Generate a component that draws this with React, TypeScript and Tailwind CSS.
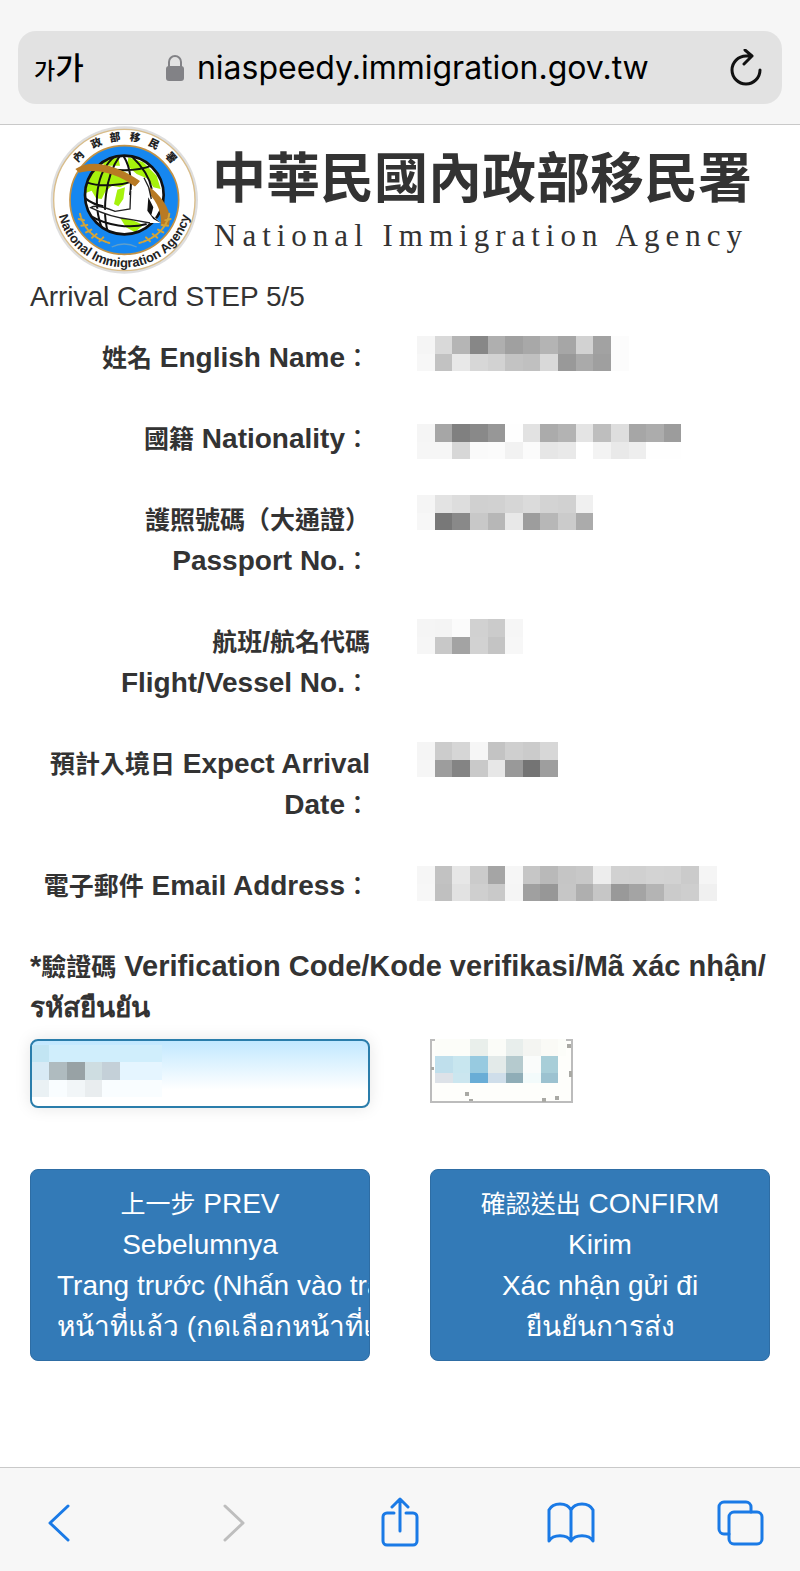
import { ReactNode } from 'react';

interface MosaicProps {
    rows: string[]
    top: number
}

interface FieldProps {
    label: ReactNode
    rows: string[]
    top: number
}

const CELL = 17.63;

const fields: FieldProps[] = [
    {
        label: <><Zh>姓名</Zh> English Name<Colon /></>,
        top: 7,
        rows: ['f5 d9 b5 87 af a0 a8 b4 a6 d2 a2 fc', 'f7 c2 e8 d7 d2 c3 c0 d9 99 aa 9f fc'],
    },
    {
        label: <><Zh>國籍</Zh> Nationality<Colon /></>,
        top: 14,
        rows: ['f5 a6 80 89 97 fe e2 ab b3 e4 be de a6 ac 9c', 'f6 f6 d7 fa fb f2 fb e6 e9 ff f3 e9 ee fe fe'],
    },
    {
        label: <><Zh>護照號碼（大通證）</Zh><br />Passport No.<Colon /></>,
        top: 4,
        rows: ['f5 e3 dd d0 d1 d6 db d3 d1 f0', 'f7 78 89 c8 b7 e8 9d b7 cb ab'],
    },
    {
        label: <><Zh>航班</Zh>/<Zh>航名代碼</Zh><br />Flight/Vessel No.<Colon /></>,
        top: 6,
        rows: ['f5 f4 fb d1 cb f6', 'f6 c8 a3 d2 c4 f7'],
    },
    {
        label: <><Zh>預計入境日</Zh> Expect Arrival Date<Colon /></>,
        top: 7,
        rows: ['f5 cc d6 f6 c3 cf cb d7', 'f6 9d 84 c9 e7 99 74 9e'],
    },
    {
        label: <><Zh>電子郵件</Zh> Email Address<Colon /></>,
        top: 9,
        rows: ['f6 c2 e7 cb a5 f6 c6 b9 c5 c8 ed d1 d0 d3 d2 cb f5', 'f7 c0 e2 cf c9 f5 a0 97 c6 af c6 99 a4 b4 cb ce f0'],
    },
];

function Zh({ children }: { children: ReactNode }) {
    return <span lang="zh-Hant" className="text-[25px] leading-none">{children}</span>
}

function Colon() {
    return <span lang="zh-Hant" className="text-[25px] leading-none font-medium font-['Noto_Sans_CJK_TC',sans-serif]">：</span>
}

// hides a private value behind grey blocks, two hex digits per block
function Mosaic(props: MosaicProps) {
    return (
        <svg className="block w-full h-[53px] -mt-2 overflow-visible" shapeRendering="crispEdges" aria-hidden="true">
            {props.rows.map((row, y) => row.split(' ').map((tone, x) => (
                <rect key={`${x}-${y}`} x={x * CELL} y={props.top + y * CELL} width={CELL} height={CELL} fill={`#${tone}${tone}${tone}`} />
            )))}
        </svg>
    )
}

const ringChars = [
    { char: '內', offset: '24.2%' },
    { char: '政', offset: '35.5%' },
    { char: '部', offset: '45.3%' },
    { char: '移', offset: '55.5%' },
    { char: '民', offset: '65.5%' },
    { char: '署', offset: '76.5%' },
];

function Emblem() {
    return (
        <svg viewBox="30 18 450 450" className="w-[150px] h-[150px] shrink-0" role="img" aria-label="National Immigration Agency emblem">
            <defs>
                <path id="ringTop" d="M 74 243 A 179 179 0 0 1 432 243" />
                <path id="ringBottom" d="M 51 243 A 202 202 0 0 0 455 243" />
                <clipPath id="globe"><circle cx="253" cy="228" r="116" /></clipPath>
            </defs>
            <circle cx="253" cy="243" r="221" fill="#dedede" />
            <circle cx="253" cy="243" r="212" fill="#fff" stroke="#d9bd8a" strokeWidth="4" />
            <circle cx="253" cy="243" r="163" fill="#1687f0" stroke="#c39245" strokeWidth="5" />
            <text className="font-['Noto_Sans_CJK_TC',sans-serif] font-black" fontSize="32" fill="#222" textAnchor="middle">
                {ringChars.map(({ char, offset }) => (
                    <textPath key={char} href="#ringTop" startOffset={offset}>{char}</textPath>
                ))}
            </text>
            <text className="font-['Liberation_Sans',sans-serif] font-bold" fontSize="39" fill="#222" textAnchor="middle">
                <textPath href="#ringBottom" startOffset="50%">National Immigration Agency</textPath>
            </text>
            <circle cx="253" cy="228" r="116" fill="#fff" />
            <g clipPath="url(#globe)">
                <path d="M145 165 L185 145 L240 150 L265 165 L262 195 L240 205 L215 200 L195 220 L185 240 L168 238 L155 215 L130 225 Z" fill="#a6f20c" />
                <path d="M265 115 L310 130 L350 170 L362 210 L340 205 L325 180 L290 165 L262 140 Z" fill="#a6f20c" />
                <path d="M232 212 L255 205 L250 240 L235 262 L222 255 Z" fill="#a6f20c" />
                <path d="M185 130 L235 115 L240 140 L195 140 Z" fill="#a6f20c" />
                <path d="M240 296 L270 300 L310 318 L285 340 L258 325 Z" fill="#a6f20c" />
                <path d="M250 110 C275 150 275 200 270 228 M240 110 C195 170 185 280 205 345 M225 112 C165 160 160 260 185 325 M275 112 C315 150 330 180 335 210 M140 190 C180 205 240 200 290 185 M132 235 C150 250 165 258 190 262 M165 140 C220 158 290 158 335 140 M150 290 C200 320 270 330 320 315" fill="none" stroke="#111" strokeWidth="6" />
            </g>
            <circle cx="253" cy="228" r="118" fill="none" stroke="#111" strokeWidth="8" />
            <path d="M106 150 C150 122 215 130 300 186 L287 204 C225 160 170 148 118 161 Z" fill="#b87a24" />
            <path d="M330 205 C380 245 398 290 386 322 L362 322 C366 285 355 250 322 220 Z" fill="#b87a24" />
            <path d="M312 176 L326 205 L334 240 L330 280 L362 312 L330 312 L275 302 C235 298 190 285 152 266 L225 277 L270 270 L272 215 Z" fill="#fff" />
            <path d="M312 176 L326 205 L334 240 M330 312 L275 302 C235 298 190 285 152 266 C170 255 200 268 225 277 L270 270 L272 215" fill="none" stroke="#222" strokeWidth="4" />
            <path d="M325 235 L340 265 L334 288 L362 312 L340 300 L322 275 Z" fill="#111" />
            <g fill="none" stroke="#d3a438" strokeWidth="6" strokeLinecap="round">
                <path d="M120 284 C130 330 165 360 208 372 M116 300 L132 304 M124 320 L142 318 M138 340 L154 332 M156 356 L170 345 M178 367 L190 355" strokeDasharray="9 5" />
                <path d="M388 284 C380 330 342 360 298 372 M392 300 L376 304 M384 320 L366 318 M370 340 L354 332 M352 356 L338 345 M330 367 L318 355" strokeDasharray="9 5" />
            </g>
            <path d="M215 384 C240 372 265 372 290 384" fill="none" stroke="#5f9fcb" strokeWidth="4" />
        </svg>
    )
}

function CaptchaImage() {
    const cells = [
        '#fcfdf9 #fcfdf9 #e9efeb #fbfcf8 #e8eeec #f4f5f2 #fafaf6',
        '#bfdfec #c8e6ef #97cae0 #e3eae9 #b5cace #fafcfb #a8ced8',
    ];
    const bottom = '#dde2e8 #cbe6ef #69add6 #cfdeea #8fadb7 #f3fbfb #9cc2d0'.split(' ');

    return (
        <svg viewBox="0 0 143 64" className="block w-[143px] h-[64px]" role="img" aria-label="Verification code image">
            <rect x="1" y="1" width="141" height="62" fill="#fefefb" stroke="#bcbcbc" strokeWidth="2" />
            <rect x="5" y="0" width="131" height="17" fill="#fcfdf9" />
            <g shapeRendering="crispEdges">
                {cells.map((row, y) => row.split(' ').map((fill, x) => (
                    <rect key={`${x}-${y}`} x={5 + x * CELL} y={y * 17} width={CELL} height="18" fill={fill} />
                )))}
                {bottom.map((fill, x) => (
                    <rect key={x} x={5 + x * CELL} y="34" width={CELL} height="10" fill={fill} />
                ))}
            </g>
            <path d="M35 53h4v4h-4z M112 59h4v4h-4z M125 57h4v4h-4z M137 5h4v4h-4z M139 32h3v6h-3z M1 28h3v3h-3z M39 60h4v2h-4z" fill="#a9a9a4" />
        </svg>
    )
}

function AddressBar() {
    return (
        <header className="h-[125px] px-[18px] pt-[31px] bg-[#f6f6f6] border-b border-[#c9c9c9]">
            <div className="h-[73px] pl-4 pr-5 flex items-center justify-between rounded-[18px] bg-[#e2e2e2] text-black">
                <button type="button" lang="ko" className="flex items-baseline font-medium font-['Noto_Sans_CJK_KR',sans-serif]">
                    <span className="text-[23px]">가</span>
                    <span className="text-[31px]">가</span>
                </button>
                <div className="flex items-center gap-3">
                    <svg viewBox="0 0 20 28" className="w-5 h-7" aria-hidden="true">
                        <path d="M4 13V8a6 6 0 0 1 12 0v5" fill="none" stroke="#828286" strokeWidth="2" />
                        <rect x="1" y="12" width="18" height="15" rx="3" fill="#828286" />
                    </svg>
                    <span className="font-['Inter',sans-serif] text-[32px] leading-10">niaspeedy.immigration.gov.tw</span>
                </div>
                <button type="button" aria-label="Reload">
                    <svg viewBox="0 0 32 38" className="w-8 h-[38px]" fill="none" stroke="#111" strokeWidth="3" strokeLinecap="round" strokeLinejoin="round">
                        <path d="M30 21A14 14 0 1 1 16 7h6 M15 1l7 6-8 8" />
                    </svg>
                </button>
            </div>
        </header>
    )
}

function Toolbar() {
    return (
        <nav className="h-[104px] px-[35px] pt-[25px] flex items-start justify-between bg-[#f7f7f7] border-t border-[#c9c9c9]">
            <button type="button" aria-label="Back">
                <svg viewBox="0 0 48 56" className="w-12 h-14" fill="none" stroke="#1a7ae6" strokeWidth="3" strokeLinecap="round" strokeLinejoin="round">
                    <path d="M33 13L15 30l18 17" />
                </svg>
            </button>
            <button type="button" aria-label="Forward" disabled>
                <svg viewBox="0 0 48 56" className="w-12 h-14" fill="none" stroke="#bebebe" strokeWidth="3" strokeLinecap="round" strokeLinejoin="round">
                    <path d="M19 13l18 17-18 17" />
                </svg>
            </button>
            <button type="button" aria-label="Share">
                <svg viewBox="0 0 48 56" className="w-12 h-14" fill="none" stroke="#1a7ae6" strokeWidth="3" strokeLinecap="round" strokeLinejoin="round">
                    <path d="M18 20h-7a4 4 0 0 0-4 4v24a4 4 0 0 0 4 4h26a4 4 0 0 0 4-4V24a4 4 0 0 0-4-4h-7 M24 38V6 M16 14l8-8 8 8" />
                </svg>
            </button>
            <button type="button" aria-label="Bookmarks">
                <svg viewBox="0 0 48 56" className="w-12 h-14" fill="none" stroke="#1a7ae6" strokeWidth="3" strokeLinecap="round" strokeLinejoin="round">
                    <path d="M24 17C20 9 6 9 2 17v31c4-7 18-7 22 0 4-7 18-7 22 0V17C42 9 28 9 24 17v31" />
                </svg>
            </button>
            <button type="button" aria-label="Tabs">
                <svg viewBox="0 0 48 56" className="w-12 h-14" fill="none" stroke="#1a7ae6" strokeWidth="3" strokeLinecap="round" strokeLinejoin="round">
                    <path d="M12 41H7a5 5 0 0 1-5-5V14a5 5 0 0 1 5-5h22a5 5 0 0 1 5 5v5" />
                    <rect x="12" y="19" width="33" height="32" rx="5" />
                </svg>
            </button>
        </nav>
    )
}

function App() {
    return (
        <div className="min-h-screen flex flex-col bg-white text-[#333] text-[28px] leading-[41px] font-['Liberation_Sans','Noto_Sans_CJK_TC',sans-serif]">
            <AddressBar />
            <main className="flex-1 pb-10">
                <div className="pl-[50px] flex items-start gap-3">
                    <Emblem />
                    <div className="pt-[22px]">
                        <h1 lang="zh-Hant" className="text-[54px] leading-[64px] font-bold whitespace-nowrap">中華民國內政部移民署</h1>
                        <p className="pl-0.5 font-['Liberation_Serif',serif] text-[31px] leading-[50px] tracking-[6px] whitespace-nowrap">National Immigration Agency</p>
                    </div>
                </div>
                <h2 className="pt-px px-[30px]">Arrival Card STEP 5/5</h2>
                <dl className="pt-5 grid gap-10">
                    {fields.map((field, i) => (
                        <div key={i} className="grid grid-cols-2">
                            <dt className="px-[30px] text-right font-bold">{field.label}</dt>
                            <dd className="pl-[17px] h-[41px]">
                                <Mosaic rows={field.rows} top={field.top} />
                            </dd>
                        </div>
                    ))}
                </dl>
                <form onSubmit={(e) => e.preventDefault()} className="pt-10">
                    <label htmlFor="code" className="block pl-[30px] pr-5 text-[29px] font-bold">
                        *<Zh>驗證碼</Zh> Verification Code/Kode verifikasi/Mã xác nhận/<wbr /><span className="text-[28px] leading-none">รหัสยืนยัน</span>
                    </label>
                    <div className="pt-[11px] grid grid-cols-2">
                        <div className="px-[30px]">
                            <div className="relative">
                                <input id="code" type="text" className="block w-full h-[69px] px-4 rounded-lg border-2 border-[#2a7dab] bg-linear-to-b from-[#c1e8ff] to-white to-75% shadow-[0_0_16px_rgba(0,0,0,0.1)] outline-none" />
                                <svg className="absolute left-0.5 top-1 w-[130px] h-[54px] pointer-events-none" shapeRendering="crispEdges" aria-hidden="true">
                                    <rect x="0" y="2" width="17" height="17" fill="#c2e5f3" />
                                    <rect x="17" y="2" width="113" height="17" fill="#d0eefc" />
                                    <rect x="0" y="19" width="17" height="18" fill="#d8eaf5" />
                                    <rect x="17" y="19" width="18" height="18" fill="#afbbbf" />
                                    <rect x="35" y="19" width="18" height="18" fill="#98a2a5" />
                                    <rect x="53" y="19" width="17" height="18" fill="#cedde1" />
                                    <rect x="70" y="19" width="18" height="18" fill="#c4d0d8" />
                                    <rect x="88" y="19" width="42" height="18" fill="#e5f5ff" />
                                    <rect x="0" y="37" width="17" height="17" fill="#eaf1f4" />
                                    <rect x="17" y="37" width="113" height="17" fill="#f9fdff" />
                                    <rect x="35" y="37" width="18" height="17" fill="#f2f6f8" />
                                    <rect x="53" y="37" width="17" height="17" fill="#e9edef" />
                                </svg>
                            </div>
                        </div>
                        <div className="px-[30px]">
                            <CaptchaImage />
                        </div>
                    </div>
                    <div className="pt-[61px] grid grid-cols-2">
                        <div className="px-[30px]">
                            <button type="button" className="block w-full px-[26px] py-[13px] overflow-hidden whitespace-nowrap text-center rounded-lg border border-[#2e6da4] bg-[#337ab7] text-white">
                                <Zh>上一步</Zh> PREV<br />
                                Sebelumnya<br />
                                Trang trước (Nhấn vào trang trước)<br />
                                หน้าที่แล้ว (กดเลือกหน้าที่แล้ว)
                            </button>
                        </div>
                        <div className="px-[30px]">
                            <button type="submit" className="block w-full px-[26px] py-[13px] overflow-hidden whitespace-nowrap text-center rounded-lg border border-[#2e6da4] bg-[#337ab7] text-white">
                                <Zh>確認送出</Zh> CONFIRM<br />
                                Kirim<br />
                                Xác nhận gửi đi<br />
                                ยืนยันการส่ง
                            </button>
                        </div>
                    </div>
                </form>
            </main>
            <Toolbar />
        </div>
    )
}

export default App
